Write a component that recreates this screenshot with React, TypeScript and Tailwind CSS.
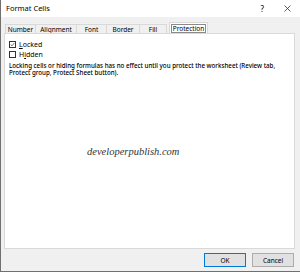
const tabs = [
  { label: "Number", w: "w-[31px]" },
  { label: "Alignment", w: "w-[41px]" },
  { label: "Font", w: "w-[30px]" },
  { label: "Border", w: "w-[33px]" },
  { label: "Fill", w: "w-[27px]" },
]

function Checkbox({ checked, label, hot }: { checked?: boolean; label: string; hot: number }) {
  return (
    <div className="flex items-center gap-[3px]">
      <span className="flex h-[7px] w-[7px] items-center justify-center border border-[#333] bg-white">
        {checked && (
          <svg width="7" height="7" viewBox="0 0 7 7" className="block">
            <path d="M1 3.6 L2.8 5.3 L6 1.4" fill="none" stroke="#222" strokeWidth="0.9" />
          </svg>
        )}
      </span>
      <span>
        {label.slice(0, hot)}
        <span className="underline">{label[hot]}</span>
        {label.slice(hot + 1)}
      </span>
    </div>
  )
}

export default function App() {
  return (
    <div className="flex h-[272px] w-[300px] flex-col border-b border-l border-[#707070] bg-[#f0f0f0] font-['Noto_Sans',sans-serif] text-[7px] leading-[7px] text-black">
      <div className="flex h-[17px] items-center bg-white pl-[5px] pr-[9px]">
        <span className="text-[7.5px]">Format Cells</span>
        <span className="ml-auto mr-[20px] text-[8px]">?</span>
        <svg width="7" height="7" viewBox="0 0 7 7">
          <path d="M0.5 0.5 L6.5 6.5 M6.5 0.5 L0.5 6.5" stroke="#333" strokeWidth="0.8" />
        </svg>
      </div>

      <div className="flex flex-1 flex-col px-[3px] pt-[5px]">
        <div className="flex h-[11px] items-end pl-[1px] text-[6.5px]">
          {tabs.map((t) => (
            <div
              key={t.label}
              className={`${t.w} flex h-[9px] items-center justify-center border-t border-r border-[#d9d9d9] bg-[#f0f0f0] first:border-l`}
            >
              {t.label}
            </div>
          ))}
          <div className="ml-[2px] flex h-[11px] w-[39px] items-center justify-center border-x border-t border-[#d9d9d9] bg-white">
            <span className="border border-[#8a8a8a] px-[1px] leading-[7px]">Protection</span>
          </div>
        </div>

        <div className="flex h-[216px] w-[291px] flex-col border border-[#d9d9d9] bg-white px-[4px] pt-[7px]">
          <div className="flex flex-col gap-[3px]">
            <Checkbox checked label="Locked" hot={0} />
            <Checkbox label="Hidden" hot={1} />
          </div>
          <p className="mt-[4px] text-[6.2px] font-medium leading-[7px]">
            Locking cells or hiding formulas has no effect until you protect the worksheet (Review tab,
            Protect group, Protect Sheet button).
          </p>
          <div className="mt-[72px] pl-[78px] font-['Liberation_Serif',serif] text-[10.5px] italic text-[#333]">
            developerpublish.com
          </div>
        </div>

        <div className="flex flex-1 items-center justify-end gap-[6px] pr-[3px]">
          <button className="h-[14px] w-[42px] border border-[#0078d7] bg-[#e1e1e1] text-[6.5px]">OK</button>
          <button className="h-[14px] w-[42px] border border-[#adadad] bg-[#e1e1e1] text-[6.5px]">Cancel</button>
        </div>
      </div>
    </div>
  )
}
